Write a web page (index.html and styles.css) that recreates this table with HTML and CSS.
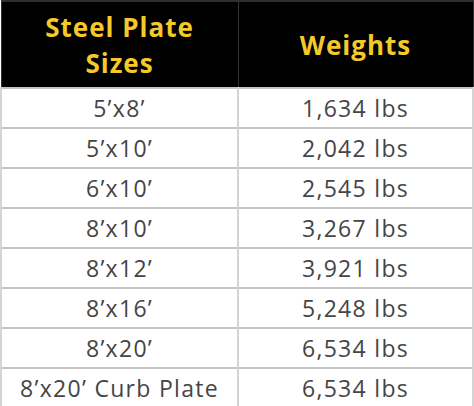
FILE: index.html
```html
<!DOCTYPE html>
<html lang="en">
<head>
<meta charset="utf-8">
<title>Steel Plate Sizes</title>
<link rel="stylesheet" href="styles.css">
</head>
<body>
<table class="plates">
  <thead>
    <tr>
      <th class="col-size">Steel Plate<br>Sizes</th>
      <th class="col-weight">Weights</th>
    </tr>
  </thead>
  <tbody>
    <tr><td>5’x8’</td><td>1,634 lbs</td></tr>
    <tr><td>5’x10’</td><td>2,042 lbs</td></tr>
    <tr><td>6’x10’</td><td>2,545 lbs</td></tr>
    <tr><td>8’x10’</td><td>3,267 lbs</td></tr>
    <tr><td>8’x12’</td><td>3,921 lbs</td></tr>
    <tr><td>8’x16’</td><td>5,248 lbs</td></tr>
    <tr><td>8’x20’</td><td>6,534 lbs</td></tr>
    <tr><td>8’x20’ Curb Plate</td><td>6,534 lbs</td></tr>
  </tbody>
</table>
</body>
</html>
```
FILE: styles.css
```css
html, body {
  margin: 0;
  padding: 0;
  background: #ffffff;
}

.plates {
  border-collapse: collapse;
  table-layout: fixed;
  width: 474px;
  font-family: "Open Sans", "Liberation Sans", sans-serif;
}

.plates th {
  background: #000000;
  color: #f5c92a;
  font-weight: 700;
  font-size: 26px;
  letter-spacing: 1px;
  line-height: 36px;
  height: 85px;
  padding: 0;
  text-align: center;
  border-top: 2px solid #2e2e2e;
  border-left: 1px solid #333333;
  border-right: 1px solid #333333;
}

.plates .col-size {
  width: 236px;
}

.plates td {
  height: 38px;
  padding: 0;
  text-align: center;
  color: #454545;
  font-size: 23px;
  font-weight: 400;
  letter-spacing: 1.3px;
  border-top: 2px solid #c4c4c4;
  border-left: 2px solid #d4d4d4;
  border-right: 2px solid #d4d4d4;
}
```
